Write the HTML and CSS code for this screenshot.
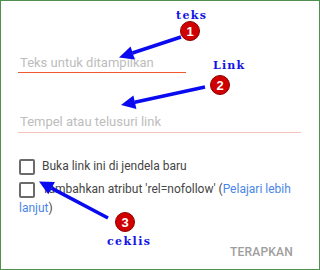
FILE: index.html
```html
<!DOCTYPE html>
<html lang="id">
<head>
<meta charset="utf-8">
<link rel="stylesheet" href="styles.css">
</head>
<body>
<div class="frame">
  <div class="field field-short">
    <span class="placeholder">Teks untuk ditampilkan</span>
  </div>
  <div class="field field-long">
    <span class="placeholder">Tempel atau telusuri link</span>
  </div>
  <div class="options">
    <p class="opt"><span class="box"></span>Buka link ini di jendela baru</p>
    <p class="opt"><span class="box"></span>Tambahkan atribut 'rel=nofollow' (<a class="link" href="#">Pelajari lebih</a> <a class="link" href="#">lanjut</a>)</p>
  </div>
  <div class="actions">
    <span class="apply">TERAPKAN</span>
  </div>
  <svg class="notes" width="320" height="270" viewBox="0 0 320 270">
    <g class="arrow">
      <line x1="181" y1="37" x2="132.4" y2="53" />
      <polygon points="119,57.5 134.8,59.6 130.6,46.4" />
      <line x1="205" y1="87" x2="134.7" y2="102.2" />
      <polygon points="121,105 136.4,109 133.4,95.5" />
      <line x1="108" y1="218" x2="51.5" y2="188.1" />
      <polygon points="39,181.5 48.3,194.2 54.9,182" />
    </g>
    <g class="badge">
      <circle cx="190" cy="31" r="9.5" />
      <circle cx="220" cy="85" r="9.5" />
      <circle cx="125" cy="222" r="9.5" />
    </g>
    <g class="num">
      <text x="190" y="35.5">1</text>
      <text x="220" y="89.5">2</text>
      <text x="125" y="226.5">3</text>
    </g>
    <g class="label">
      <text x="176" y="19" textLength="30" lengthAdjust="spacing">teks</text>
      <text x="213" y="69" textLength="31" lengthAdjust="spacing">Link</text>
      <text x="107" y="245" textLength="43" lengthAdjust="spacing">ceklis</text>
    </g>
  </svg>
</div>
</body>
</html>
```

FILE: styles.css
```css
html, body {
  margin: 0;
  padding: 0;
  background: #ffffff;
}

.frame {
  position: relative;
  box-sizing: border-box;
  width: 320px;
  height: 270px;
  border: 1px solid #4f8f4f;
  padding: 54px 18px 0 17px;
  font-family: Roboto, "Liberation Sans", sans-serif;
  overflow: hidden;
}

.field {
  font-size: 13px;
  line-height: 16px;
}

.field-short {
  width: 168px;
  padding-bottom: 1px;
  border-bottom: 1px solid #f2582f;
}

.field-long {
  width: 283px;
  margin-top: 41px;
  padding-bottom: 2px;
  border-bottom: 1px solid #f6c4bd;
}

.placeholder {
  color: #bdbdbd;
  padding-left: 2px;
}

.options {
  margin-top: 24px;
}

.opt {
  margin: 0 0 4px 0;
  font-size: 12px;
  line-height: 19px;
  color: #454545;
  padding-left: 1px;
}

.box {
  display: inline-block;
  box-sizing: border-box;
  width: 16px;
  height: 16px;
  border: 2px solid #6b6b6b;
  border-radius: 2px;
  margin-right: 7px;
  vertical-align: -5px;
}

.link {
  color: #4a86e8;
  text-decoration: none;
}

.actions {
  display: flex;
  justify-content: flex-end;
  margin-top: 26px;
  padding-right: 8px;
}

.apply {
  font-size: 12px;
  line-height: 16px;
  font-weight: 500;
  color: #9e9e9e;
  letter-spacing: 0.2px;
}

.notes {
  position: absolute;
  left: -1px;
  top: -1px;
}

.arrow line {
  stroke: #0a0af0;
  stroke-width: 3.5;
}

.arrow polygon {
  fill: #0a0af0;
}

.badge circle {
  fill: #d00000;
  stroke: #8c0000;
  stroke-width: 1;
}

.num text {
  fill: #ffffff;
  font-family: "Liberation Sans", Arial, sans-serif;
  font-weight: bold;
  font-size: 13px;
  text-anchor: middle;
}

.label text {
  fill: #1414e6;
  font-family: "DejaVu Serif", serif;
  font-weight: bold;
  font-size: 11px;
}
```
